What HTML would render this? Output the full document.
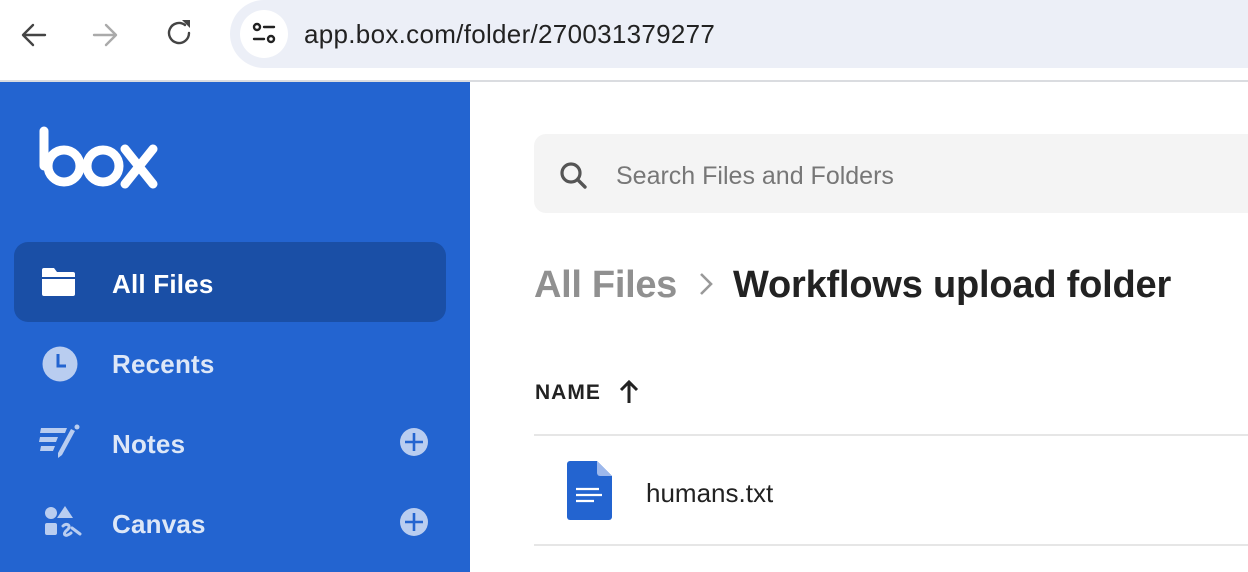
<!DOCTYPE html>
<html><head><meta charset="utf-8"><style>
*{margin:0;padding:0;box-sizing:border-box}
body{width:1248px;height:572px;overflow:hidden;background:#fff;font-family:"Liberation Sans",sans-serif;position:relative}
.abs{position:absolute}
.nav{color:#dde7f7;font-size:26px;font-weight:bold;left:112px;letter-spacing:0.2px}
</style></head><body>
<!-- browser bar -->
<svg class="abs" style="left:0;top:0" width="230" height="70">
<g fill="none" stroke-width="2.4" stroke-linecap="round" stroke-linejoin="round">
<path d="M45 35H24M33 25l-10 10 10 10" stroke="#444"/>
<path d="M94 35h21M106 25l10 10-10 10" stroke="#aaa"/>
<path d="M189 33a10 10 0 1 1-4-8" stroke="#444"/>
</g>
<path d="M182 20h8v8z" fill="#444"/>
</svg>
<div class="abs" style="left:230px;top:0;width:1100px;height:68px;background:#eceff7;border-radius:34px"></div>
<div class="abs" style="left:240px;top:10px;width:48px;height:48px;background:#fff;border-radius:50%"></div>
<svg class="abs" style="left:240px;top:10px" width="48" height="48">
<g fill="none" stroke="#222" stroke-width="2.4" stroke-linecap="round">
<circle cx="17" cy="17" r="3"/><path d="M24 17h10M14 29h10"/><circle cx="31" cy="29" r="3"/>
</g></svg>
<div class="abs" style="left:304px;top:19px;font-size:26px;color:#222;letter-spacing:0.3px">app.box.com/folder/270031379277</div>
<div class="abs" style="left:0;top:80px;width:1248px;height:2px;background:#dadce0"></div>
<!-- sidebar -->
<div class="abs" style="left:0;top:82px;width:470px;height:490px;background:#2364d0"></div>
<svg class="abs" style="left:0;top:82px" width="200" height="130">
<g fill="none" stroke="#fff" stroke-width="9" stroke-linecap="round">
<path d="M44 49v35"/>
<circle cx="64" cy="84" r="16"/>
<circle cx="103" cy="84" r="16"/>
<path d="M125 67l28 35M153 67l-28 35"/>
</g></svg>
<div class="abs" style="left:14px;top:242px;width:432px;height:80px;background:#1a4fa6;border-radius:14px"></div>
<svg class="abs" style="left:40px;top:266px" width="40" height="34"><path d="M2 4a2 2 0 0 1 2-2h10l3 4h16a2 2 0 0 1 2 2v20a2 2 0 0 1-2 2H4a2 2 0 0 1-2-2z" fill="#fff"/><path d="M2 12h35" stroke="#1a4fa6" stroke-width="2"/></svg>
<div class="abs nav" style="top:269px;color:#fff">All Files</div>
<svg class="abs" style="left:40px;top:344px" width="40" height="40"><circle cx="20" cy="20" r="17.5" fill="#b9cdf0"/><path d="M18 10v12h8" fill="none" stroke="#2364d0" stroke-width="3"/></svg>
<div class="abs nav" style="top:349px">Recents</div>
<svg class="abs" style="left:38px;top:424px" width="44" height="40">
<g fill="#b9cdf0"><path d="M3 4h26l-2 5H2z"/><path d="M2 13h18l-2 5H1z"/><path d="M3 22h14l-2 5H2z"/>
<path d="M33 5l4 2-13 24-4 3 0-5z"/><circle cx="39" cy="3" r="2.5"/></g></svg>
<div class="abs nav" style="top:429px">Notes</div>
<svg class="abs" style="left:400px;top:428px" width="30" height="30"><circle cx="14" cy="14" r="14" fill="#b9cdf0"/><path d="M14 5v18M5 14h18" stroke="#2364d0" stroke-width="2.6"/></svg>
<svg class="abs" style="left:42px;top:504px" width="40" height="40">
<g fill="#b9cdf0"><circle cx="9" cy="9" r="6"/><path d="M23 2l8 12H15z"/><rect x="3" y="19" width="12" height="12" rx="2"/></g>
<path d="M21 22c4-4 9 0 4 4s-2 8 4 3M30 24l8 6" fill="none" stroke="#b9cdf0" stroke-width="3" stroke-linecap="round"/></svg>
<div class="abs nav" style="top:509px">Canvas</div>
<svg class="abs" style="left:400px;top:508px" width="30" height="30"><circle cx="14" cy="14" r="14" fill="#b9cdf0"/><path d="M14 5v18M5 14h18" stroke="#2364d0" stroke-width="2.6"/></svg>
<!-- main -->
<div class="abs" style="left:534px;top:134px;width:740px;height:79px;background:#f4f4f4;border-radius:12px"></div>
<svg class="abs" style="left:558px;top:160px" width="32" height="32"><circle cx="13" cy="13" r="9" fill="none" stroke="#555" stroke-width="3.2"/><path d="M20 20l7 7" stroke="#555" stroke-width="3.4" stroke-linecap="round"/></svg>
<div class="abs" style="left:616px;top:162px;font-size:25px;color:#777">Search Files and Folders</div>
<div class="abs" style="left:534px;top:264px;font-size:38px;color:#909090;font-weight:bold;letter-spacing:-0.3px">All Files</div>
<svg class="abs" style="left:696px;top:270px" width="24" height="30"><path d="M5 4l10 10-10 10" fill="none" stroke="#999" stroke-width="2.6"/></svg>
<div class="abs" style="left:733px;top:264px;font-size:38px;color:#222;font-weight:bold;letter-spacing:-0.2px">Workflows upload folder</div>
<div class="abs" style="left:535px;top:381px;font-size:21px;color:#222;font-weight:bold;letter-spacing:1px">NAME</div>
<svg class="abs" style="left:618px;top:378px" width="22" height="28"><path d="M11 25V4M3 12l8-8 8 8" fill="none" stroke="#222" stroke-width="3"/></svg>
<div class="abs" style="left:534px;top:434px;width:714px;height:2px;background:#e6e6e6"></div>
<svg class="abs" style="left:566px;top:460px" width="48" height="60">
<path d="M4 1h27l15 15v41a3 3 0 0 1-3 3H4a3 3 0 0 1-3-3V4a3 3 0 0 1 3-3z" fill="#2364d0"/>
<path d="M31 1l15 15H34a3 3 0 0 1-3-3z" fill="#9db8ec"/>
<path d="M10 29h23M10 35h26M10 41h18" stroke="#fff" stroke-width="2.2"/></svg>
<div class="abs" style="left:646px;top:478px;font-size:26px;color:#222">humans.txt</div>
<div class="abs" style="left:534px;top:544px;width:714px;height:2px;background:#e6e6e6"></div>
</body></html>
